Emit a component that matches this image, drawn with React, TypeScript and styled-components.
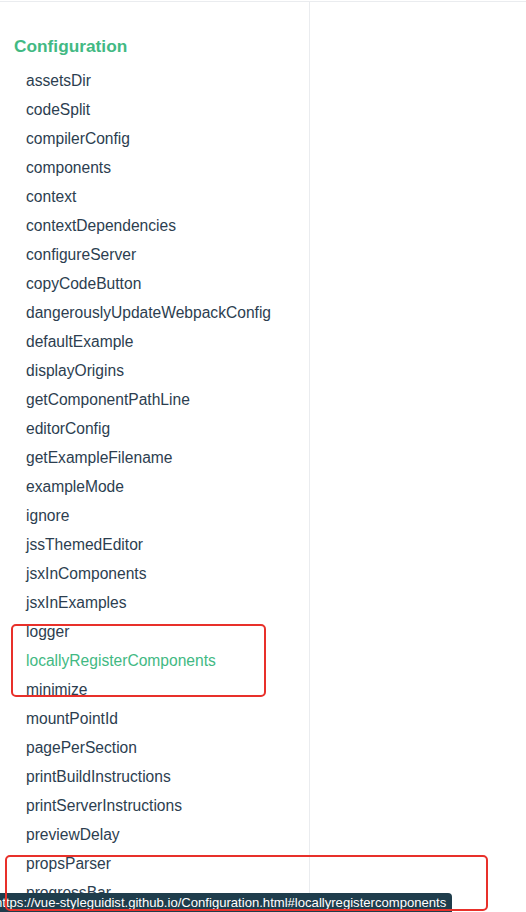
import React from "react";
import styled, { createGlobalStyle } from "styled-components";

const Global = createGlobalStyle`
  html, body { margin: 0; padding: 0; background: #fff; }
  body { width: 526px; height: 912px; overflow: hidden; font-family: "Liberation Sans", Arial, sans-serif; }
`;

const Page = styled.div`
  position: relative;
  width: 526px;
  height: 912px;
  overflow: hidden;
  padding-top: 1px;
  box-sizing: border-box;
`;

const Shell = styled.div`
  display: flex;
  height: 100%;
  border-top: 1px solid #eaecef;
`;

const Sidebar = styled.nav`
  width: 310px;
  flex: none;
  border-right: 1px solid #eaecef;
  padding: 32px 0 0 14px;
  box-sizing: border-box;
`;

const Heading = styled.div`
  font-size: 17.3px;
  font-weight: bold;
  line-height: 25px;
  color: #42b983;
`;

const List = styled.ul`
  list-style: none;
  margin: 7px 0 0;
  padding: 0 0 0 12px;
`;

const Item = styled.li<{ $active?: boolean }>`
  font-size: 15.6px;
  line-height: 29px;
  color: ${(p) => (p.$active ? "#42b983" : "#2c3e50")};
  white-space: nowrap;
`;

const Highlight = styled.div<{ $x: number; $y: number; $w: number; $h: number }>`
  position: absolute;
  left: ${(p) => p.$x}px;
  top: ${(p) => p.$y}px;
  width: ${(p) => p.$w}px;
  height: ${(p) => p.$h}px;
  border: 2px solid #e8302a;
  border-radius: 5px;
  box-sizing: border-box;
  pointer-events: none;
`;

const StatusBar = styled.div`
  position: absolute;
  left: 0;
  bottom: 0;
  width: 452px;
  height: 19px;
  background: #1f3d4c;
  border-top-right-radius: 4px;
  color: #fff;
  font-size: 13.1px;
  line-height: 19px;
  white-space: nowrap;
  overflow: hidden;
  text-indent: -5px;
`;

const items = [
  "assetsDir",
  "codeSplit",
  "compilerConfig",
  "components",
  "context",
  "contextDependencies",
  "configureServer",
  "copyCodeButton",
  "dangerouslyUpdateWebpackConfig",
  "defaultExample",
  "displayOrigins",
  "getComponentPathLine",
  "editorConfig",
  "getExampleFilename",
  "exampleMode",
  "ignore",
  "jssThemedEditor",
  "jsxInComponents",
  "jsxInExamples",
  "logger",
  "locallyRegisterComponents",
  "minimize",
  "mountPointId",
  "pagePerSection",
  "printBuildInstructions",
  "printServerInstructions",
  "previewDelay",
  "propsParser",
  "progressBar",
  "renderRootJsx",
];

export default function App() {
  return (
    <>
      <Global />
      <Page>
        <Shell>
          <Sidebar>
            <Heading>Configuration</Heading>
            <List>
              {items.map((it) => (
                <Item key={it} $active={it === "locallyRegisterComponents"}>
                  {it}
                </Item>
              ))}
            </List>
          </Sidebar>
        </Shell>
        <StatusBar>https://vue-styleguidist.github.io/Configuration.html#locallyregistercomponents</StatusBar>
        <Highlight $x={11} $y={624} $w={255} $h={73} />
        <Highlight $x={5} $y={855} $w={483} $h={56} />
      </Page>
    </>
  );
}
